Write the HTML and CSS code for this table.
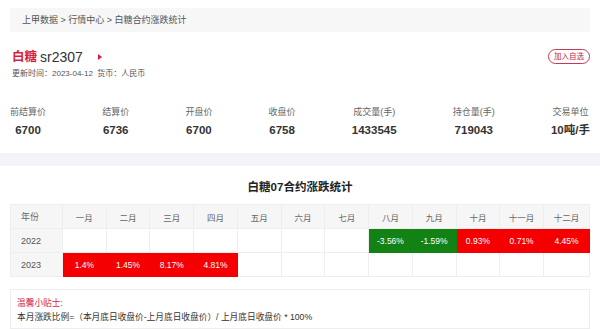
FILE: index.html
```html
<!DOCTYPE html>
<html lang="zh-CN">
<head>
<meta charset="utf-8">
<link rel="stylesheet" href="styles.css">
</head>
<body>
<div class="page">
  <div class="crumb">上甲数据 &gt; 行情中心 &gt; 白糖合约涨跌统计</div>
  <div class="head">
    <div class="head-left">
      <div class="title"><span class="name">白糖</span><span class="code">sr2307</span><span class="tri"></span></div>
      <div class="meta">更新时间：2023-04-12&nbsp;&nbsp;货币：人民币</div>
    </div>
    <div class="btn">加入自选</div>
  </div>
  <div class="stats">
    <div class="stat"><div class="lbl">前结算价</div><div class="val">6700</div></div>
    <div class="stat"><div class="lbl">结算价</div><div class="val">6736</div></div>
    <div class="stat"><div class="lbl">开盘价</div><div class="val">6700</div></div>
    <div class="stat"><div class="lbl">收盘价</div><div class="val">6758</div></div>
    <div class="stat"><div class="lbl">成交量(手)</div><div class="val">1433545</div></div>
    <div class="stat"><div class="lbl">持仓量(手)</div><div class="val">719043</div></div>
    <div class="stat"><div class="lbl">交易单位</div><div class="val">10吨/手</div></div>
  </div>
</div>
<div class="band"></div>
<div class="page">
  <div class="tbl-title">白糖07合约涨跌统计</div>
  <div class="tbl">
    <div class="c th yr">年份</div>
    <div class="c th">一月</div><div class="c th">二月</div><div class="c th">三月</div><div class="c th">四月</div>
    <div class="c th">五月</div><div class="c th">六月</div><div class="c th">七月</div><div class="c th">八月</div>
    <div class="c th">九月</div><div class="c th">十月</div><div class="c th">十一月</div><div class="c th">十二月</div>

    <div class="c yr ybg">2022</div>
    <div class="c"></div><div class="c"></div><div class="c"></div><div class="c"></div>
    <div class="c"></div><div class="c"></div><div class="c"></div>
    <div class="c dn">-3.56%</div><div class="c dn">-1.59%</div>
    <div class="c up">0.93%</div><div class="c up">0.71%</div><div class="c up">4.45%</div>

    <div class="c yr ybg">2023</div>
    <div class="c up">1.4%</div><div class="c up">1.45%</div><div class="c up">8.17%</div><div class="c up">4.81%</div>
    <div class="c"></div><div class="c"></div><div class="c"></div><div class="c"></div>
    <div class="c"></div><div class="c"></div><div class="c"></div><div class="c"></div>
  </div>
  <div class="tip">
    <div class="tip-h">温馨小贴士:</div>
    <div class="tip-b">本月涨跌比例=（本月底日收盘价-上月底日收盘价）/ 上月底日收盘价 * 100%</div>
  </div>
</div>
</body>
</html>
```

FILE: styles.css
```css
* { box-sizing: border-box; }
html, body { margin: 0; padding: 0; background: #fff; }
body {
  font-family: "Liberation Sans", "Noto Sans CJK SC", sans-serif;
  color: #333;
  width: 600px;
  overflow: hidden;
}
.page { padding: 0 10px; }
.crumb {
  margin-top: 8px;
  height: 24px;
  line-height: 24px;
  background: #f7f7f7;
  padding-left: 12px;
  font-size: 9px;
  color: #555;
}
.head {
  display: flex;
  justify-content: space-between;
  align-items: flex-start;
  margin-top: 14px;
}
.title {
  display: flex;
  align-items: center;
  height: 22px;
  line-height: 22px;
  padding-left: 2px;
}
.name { color: #d81e3c; font-weight: bold; font-size: 12.5px; }
.code { color: #333; margin-left: 3px; font-size: 14px; }
.tri {
  width: 0; height: 0;
  border-top: 3px solid transparent;
  border-bottom: 3px solid transparent;
  border-left: 4.5px solid #d81e3c;
  margin-left: 15px;
}
.meta { font-size: 8px; color: #555; line-height: 12px; padding-left: 2px; }
.btn {
  margin-top: 3px;
  height: 15px;
  padding: 0 5px;
  border: 1px solid #c8385a;
  border-radius: 8px;
  font-size: 7.5px;
  line-height: 13px;
  color: #b8284a;
}
.stats {
  display: flex;
  justify-content: space-between;
  margin-top: 26px;
  height: 47px;
}
.stat { text-align: center; }
.lbl { font-size: 9px; color: #666; line-height: 12px; }
.val { font-size: 11.5px; font-weight: bold; color: #333; margin-top: 5px; line-height: 14px; }
.band { height: 13px; background: #f3f4f8; }
.tbl-title {
  text-align: center;
  font-size: 11.5px;
  font-weight: bold;
  color: #222;
  margin-top: 13px;
  line-height: 16px;
}
.tbl {
  margin-top: 9px;
  display: grid;
  grid-template-columns: 52px repeat(11, 1fr) 46px;
  grid-template-rows: 24px 24px 24px;
  border-top: 1px solid #eee;
  border-left: 1px solid #eee;
}
.c {
  border-right: 1px solid #eee;
  border-bottom: 1px solid #eee;
  font-size: 8.5px;
  display: flex;
  align-items: center;
  justify-content: center;
  color: #555;
}
.th { background: #f6f6f6; color: #666; }
.yr { justify-content: flex-start; padding-left: 10px; font-size: 9px; }
.ybg { background: #f6f6f6; color: #555; }
.up { background: #f50000; color: #fff; border-color: #f50000; }
.dn { background: #138214; color: #fff; border-color: #138214; }
.tip {
  margin-top: 12px;
  border: 1px solid #eee;
  padding: 6px 6px 4px;
  font-size: 8.7px;
  line-height: 14px;
}
.tip-h { color: #d81e3c; }
.tip-b { color: #333; }
```
